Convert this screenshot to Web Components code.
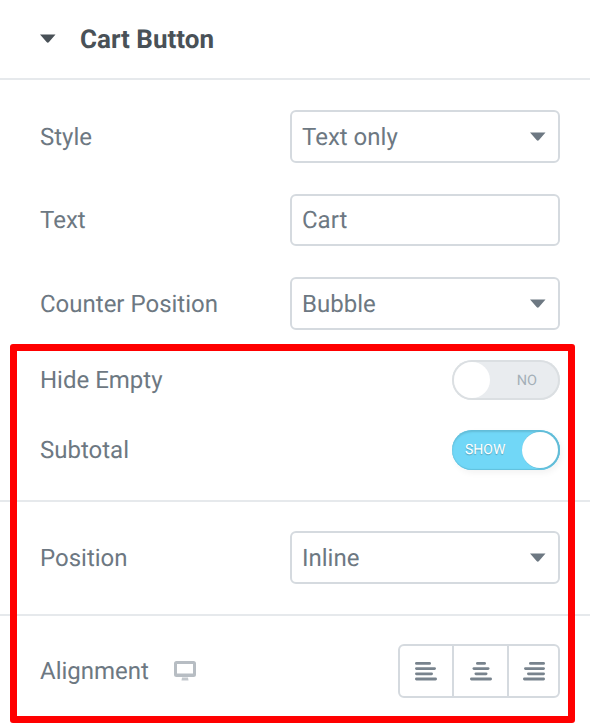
<!DOCTYPE html>
<html>
<head>
<meta charset="utf-8">
<title>Cart Button</title>
<style>
  html, body { margin: 0; background: #fff; }
  body { width: 590px; height: 726px; overflow: hidden; position: relative; font-family: Roboto, "Liberation Sans", sans-serif; color: #6d7882; text-rendering: geometricPrecision; }
</style>
</head>
<body>
<panel-heading>Cart Button</panel-heading>
<panel-section style="--top:30px;--bottom:30px">
  <control-row label="Style" height="53"><select-box>Text only</select-box></control-row>
  <control-row label="Text" height="52" style="margin-top:1px"><text-box>Cart</text-box></control-row>
  <control-row label="Counter Position" height="53" style="margin-top:1px"><select-box>Bubble</select-box></control-row>
  <control-row label="Hide Empty" height="40"><switch-toggle label="NO"></switch-toggle></control-row>
  <control-row label="Subtotal" height="40"><switch-toggle label="SHOW" on></switch-toggle></control-row>
</panel-section>
<panel-section style="--top:29px;--bottom:30px">
  <control-row label="Position" height="53"><select-box>Inline</select-box></control-row>
</panel-section>
<panel-section style="--top:28px;--bottom:0px">
  <control-row label="Alignment" height="54" device><align-group></align-group></control-row>
</panel-section>
<red-frame></red-frame>

<script>
class PanelHeading extends HTMLElement {
  constructor() {
    super()
    this.attachShadow({ mode: 'open' })
    this.shadowRoot.innerHTML = `
      <style>
        :host { display: flex; align-items: center; height: 78px; padding: 0 0 0 40px; border-bottom: 2px solid #e6e9ec; }
        svg { width: 16px; height: 9px; margin-right: 24px; margin-top: -1px; }
        span { font: 700 26px Roboto, sans-serif; color: #495157; padding-top: 2px; }
      </style>
      <svg viewBox="0 0 16 9"><path d="M0 .5h15.500L9 8a1.500 1.500 0 0 1-2.400 0z" fill="#495157"/></svg>
      <span><slot></slot></span>`
  }
}

class PanelSection extends HTMLElement {
  constructor() {
    super()
    this.attachShadow({ mode: 'open' })
    this.shadowRoot.innerHTML = `
      <style>
        :host { display: flex; flex-direction: column; gap: 30px; padding: var(--top) 30px var(--bottom) 40px; border-bottom: 2px solid #e6e9ec; }
        :host(:last-of-type) { border-bottom: 0; }
      </style>
      <slot></slot>`
  }
}

class ControlRow extends HTMLElement {
  connectedCallback() {
    if (this.shadowRoot) return
    this.attachShadow({ mode: 'open' })
    const device = this.hasAttribute('device') ? `
      <svg class="device" viewBox="0 0 22 20"><path fill-rule="evenodd" fill="#b7bdc3" d="M2.500 0h17A2.500 2.500 0 0 1 22 2.500v11a2.500 2.500 0 0 1-2.500 2.500h-17A2.500 2.500 0 0 1 0 13.500v-11A2.500 2.500 0 0 1 2.500 0zM3 3v9.500h16V3z"/><path fill="#c3c8cd" d="M8 16.500h6l.5 3h-7z"/></svg>` : ''
    this.shadowRoot.innerHTML = `
      <style>
        :host { display: flex; align-items: center; justify-content: space-between; height: ${this.getAttribute('height')}px; }
        .label { display: flex; align-items: center; font: 400 24px Roboto, sans-serif; color: #6d7882; white-space: nowrap; }
        .device { width: 22px; height: 20px; margin-left: 25px; }
      </style>
      <div class="label">${this.getAttribute('label')}${device}</div>
      <slot></slot>`
  }
}

class SelectBox extends HTMLElement {
  constructor() {
    super()
    this.attachShadow({ mode: 'open' })
    this.shadowRoot.innerHTML = `
      <style>
        :host { display: flex; align-items: center; justify-content: space-between; box-sizing: border-box; width: 270px; height: 100%; padding: 0 12px 0 10px; border: 2px solid #d5dadf; border-radius: 6px; font: 400 24px Roboto, sans-serif; color: #6d7882; }
        svg { width: 16px; height: 9px; }
      </style>
      <span><slot></slot></span>
      <svg viewBox="0 0 16 9"><path d="M0 .5h15.500L9 8a1.500 1.500 0 0 1-2.400 0z" fill="#6d7882"/></svg>`
  }
}

class TextBox extends HTMLElement {
  constructor() {
    super()
    this.attachShadow({ mode: 'open' })
    this.shadowRoot.innerHTML = `
      <style>
        :host { display: flex; align-items: center; box-sizing: border-box; width: 270px; height: 100%; padding: 0 10px; border: 2px solid #d5dadf; border-radius: 6px; font: 400 24px Roboto, sans-serif; color: #6d7882; }
      </style>
      <slot></slot>`
  }
}

class SwitchToggle extends HTMLElement {
  connectedCallback() {
    if (this.shadowRoot) return
    this.attachShadow({ mode: 'open' })
    this.shadowRoot.innerHTML = `
      <style>
        :host { display: flex; align-items: center; box-sizing: border-box; width: 108px; height: 40px; border-radius: 20px; position: relative; background: #e9ecef; box-shadow: inset 0 0 0 2px #dbdfe2; font: 400 14.500px Roboto, sans-serif; color: #a4afb7; justify-content: flex-end; padding-right: 23px; }
        :host([on]) { background: #71d7f7; box-shadow: inset 0 2px 2px 0 #62bcd7, inset 0 -1px 1px 0 #62c0dc, 2px 3px 6px rgba(0,0,0,.05); color: #fff; justify-content: flex-start; padding: 0 0 0 13px; font-size: 14px; }
        :host([on]) span { text-shadow: 0 1px 1px rgba(0,0,0,.25); }
        .knob { position: absolute; top: 2px; left: 2px; width: 36px; height: 36px; border-radius: 50%; background: #fff; }
        :host([on]) .knob { left: auto; right: 2px; box-shadow: 1px 0 0 1px #62bcd7; }
      </style>
      <span>${this.getAttribute('label')}</span>
      <div class="knob"></div>`
  }
}

class AlignGroup extends HTMLElement {
  constructor() {
    super()
    this.attachShadow({ mode: 'open' })
    const bars = (rows) => rows.map(([x, w], i) => `<rect x="${x}" y="${i * 5.200}" width="${w}" height="2.800" rx="1.400"/>`).join('')
    const icon = (rows) => `<div class="cell"><svg viewBox="0 0 22 19" fill="#78838d">${bars(rows)}</svg></div>`
    this.shadowRoot.innerHTML = `
      <style>
        :host { display: grid; grid-template-columns: 52px 55px 1fr; box-sizing: border-box; width: 162px; height: 100%; border: 2px solid #d5dadf; border-radius: 6px; }
        .cell { display: flex; align-items: center; justify-content: center; border-left: 2px solid #d5dadf; }
        .cell:first-of-type { border-left: 0; }
        svg { width: 22px; height: 19px; }
      </style>
      ${icon([[0, 16], [0, 21], [0, 18], [0, 22]])}
      ${icon([[6, 10], [2.500, 17], [4.500, 13], [0, 22]])}
      ${icon([[6, 16], [1, 21], [4, 18], [0, 22]])}`
  }
}

class RedFrame extends HTMLElement {
  constructor() {
    super()
    this.attachShadow({ mode: 'open' })
    this.shadowRoot.innerHTML = `
      <style>
        :host { display: block; position: absolute; left: 10px; top: 344px; width: 565px; height: 379px; box-sizing: border-box; border: 7.500px solid #ff0000; border-radius: 3px; pointer-events: none; }
      </style>`
  }
}

customElements.define('panel-heading', PanelHeading)
customElements.define('panel-section', PanelSection)
customElements.define('control-row', ControlRow)
customElements.define('select-box', SelectBox)
customElements.define('text-box', TextBox)
customElements.define('switch-toggle', SwitchToggle)
customElements.define('align-group', AlignGroup)
customElements.define('red-frame', RedFrame)
</script>
</body>
</html>
